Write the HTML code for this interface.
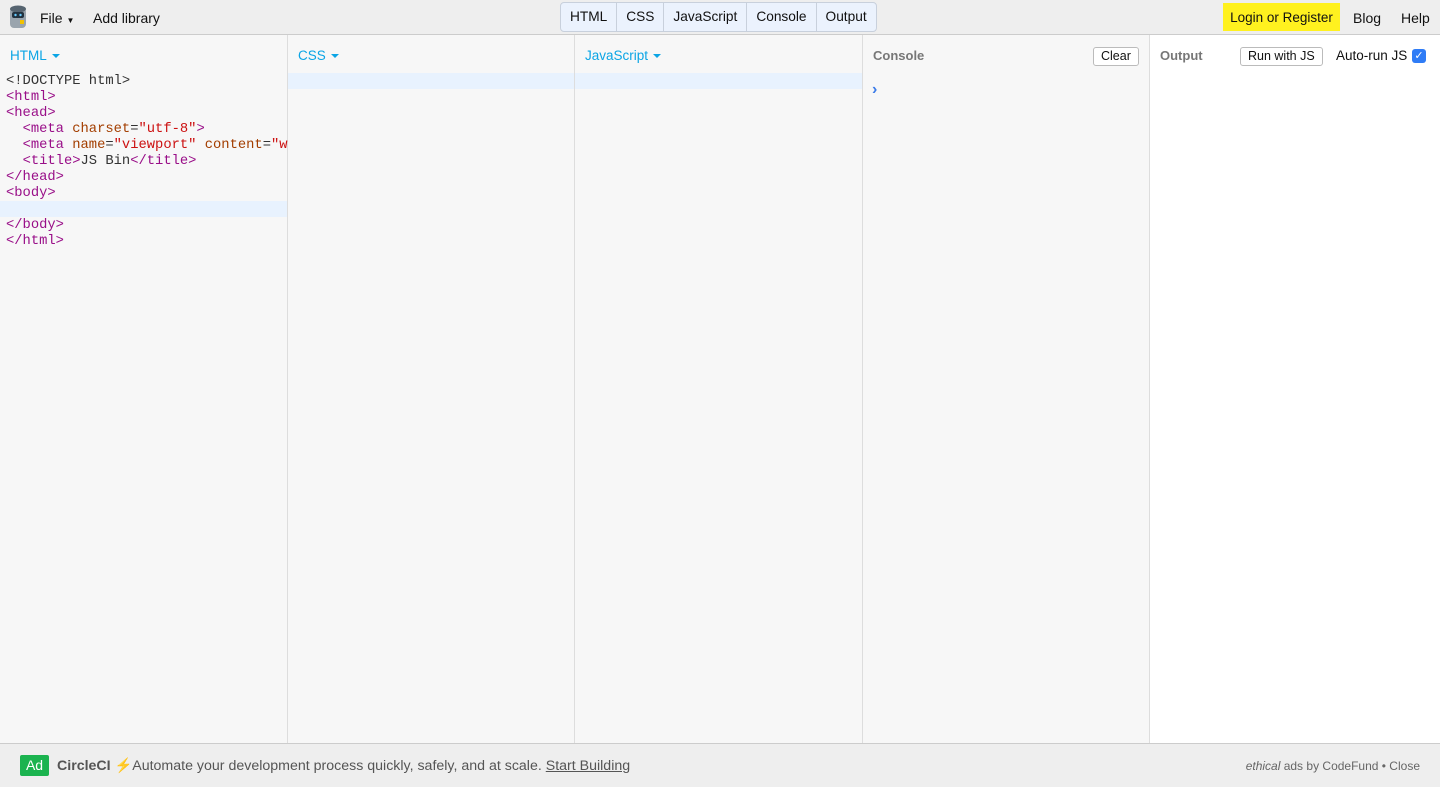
<!DOCTYPE html>
<html><head><meta charset="utf-8"><style>
*{box-sizing:border-box;margin:0;padding:0}
body{width:1440px;height:787px;overflow:hidden;font-family:"Liberation Sans",sans-serif;font-size:14px;background:#f7f7f7;position:relative;color:#111}
.top{position:absolute;left:0;top:0;width:1440px;height:35px;background:#eee;border-bottom:1px solid #ccc}
.top span{position:absolute;top:10px;font-size:14px}
.tabs{position:absolute;left:560px;top:2px;height:30px;display:flex;border:1px solid #c8d0dc;border-radius:4px;background:#ebf2fd;overflow:hidden}
.tabs div{padding:0 9px;line-height:28px;border-left:1px solid #c8d0dc;font-size:13.7px}
.tabs div:first-child{border-left:none}
.login{position:absolute;left:1223px;top:3px;width:117px;height:28px;background:#fff11f;line-height:29px;text-align:center;font-size:13.5px}
.panel{position:absolute;top:35px;height:708px;border-right:1px solid #ddd}
.ph{position:absolute;left:10px;top:13px;color:#0ba5e5;font-size:13.5px}
.ph i{display:inline-block;border:4px solid transparent;border-top:4px solid #0ba5e5;border-bottom:none;margin-left:5px;vertical-align:2px}
.code{position:absolute;left:6px;top:39px;font-family:"Liberation Mono",monospace;font-size:13.8px;line-height:16px;white-space:pre;color:#333}
.t{color:#990e88}.a{color:#a33e00}.s{color:#cc1111}
.hl{position:absolute;left:0;width:100%;height:16px;background:#e8f2fe}
.btn{position:absolute;top:12px;height:19px;border:1px solid #bbb;border-radius:3px;background:#fff;font-size:12.5px;line-height:17px;padding:0 7px}
.foot{position:absolute;left:0;top:743px;width:1440px;height:44px;background:#eee;border-top:1px solid #ccc}
</style></head><body>
<div class="top">
<svg style="position:absolute;left:9px;top:5px" width="18" height="24" viewBox="0 0 18 24"><rect x="1" y="3" width="16" height="20" rx="4" fill="#9aa4ad"/><ellipse cx="9" cy="4" rx="8" ry="3.5" fill="#566470"/><rect x="3" y="7" width="12" height="6" rx="2" fill="#23323f"/><circle cx="6.5" cy="10" r="1.2" fill="#6cf"/><circle cx="11.5" cy="10" r="1.2" fill="#6cf"/><rect x="11" y="15" width="4" height="4" fill="#f2c200"/></svg>
<span style="left:40px">File <small style="font-size:8px">▼</small></span>
<span style="left:93px">Add library</span>
<div class="tabs"><div>HTML</div><div>CSS</div><div>JavaScript</div><div>Console</div><div>Output</div></div>
<div class="login">Login or Register</div>
<span style="left:1353px">Blog</span>
<span style="left:1401px">Help</span>
</div>
<div class="panel" style="left:0;width:288px">
<div class="ph">HTML<i></i></div>
<div class="hl" style="top:166px"></div>
<div class="code">&lt;!DOCTYPE html&gt;
<span class="t">&lt;html&gt;</span>
<span class="t">&lt;head&gt;</span>
  <span class="t">&lt;meta</span> <span class="a">charset</span>=<span class="s">"utf-8"</span><span class="t">&gt;</span>
  <span class="t">&lt;meta</span> <span class="a">name</span>=<span class="s">"viewport"</span> <span class="a">content</span>=<span class="s">"w</span>
  <span class="t">&lt;title&gt;</span>JS Bin<span class="t">&lt;/title&gt;</span>
<span class="t">&lt;/head&gt;</span>
<span class="t">&lt;body&gt;</span>

<span class="t">&lt;/body&gt;</span>
<span class="t">&lt;/html&gt;</span></div>
</div>
<div class="panel" style="left:288px;width:287px"><div class="ph">CSS<i></i></div><div class="hl" style="top:38px"></div></div>
<div class="panel" style="left:575px;width:288px"><div class="ph">JavaScript<i></i></div><div class="hl" style="top:38px"></div></div>
<div class="panel" style="left:863px;width:287px">
<div class="ph" style="color:#777;font-weight:bold;font-size:13px">Console</div>
<div class="btn" style="left:230px">Clear</div>
<div style="position:absolute;left:9px;top:46px;color:#3b7be8;font-weight:bold;font-size:16px">›</div>
</div>
<div class="panel" style="left:1150px;width:290px;background:#fff;border:none">
<div class="ph" style="color:#777;font-weight:bold;font-size:13px">Output</div>
<div class="btn" style="left:90px">Run with JS</div>
<div style="position:absolute;left:186px;top:13px;font-size:13.5px">Auto-run JS</div>
<div style="position:absolute;left:262px;top:14px;width:14px;height:14px;background:#2f7cf6;border-radius:3px;color:#fff;font-size:11px;line-height:14px;text-align:center">✓</div>
</div>
<div class="foot">
<div style="position:absolute;left:20px;top:11px;width:29px;height:21px;background:#1bb34f;color:#fff;border-radius:2px;text-align:center;line-height:21px;font-size:14px">Ad</div>
<div style="position:absolute;left:57px;top:14px;font-size:14.2px;color:#555"><b>CircleCI</b> <span style="color:#f4c24d">⚡</span>Automate your development process quickly, safely, and at scale. <u>Start Building</u></div>
<div style="position:absolute;right:20px;top:15px;font-size:12px;color:#666"><i>ethical</i> ads by CodeFund • Close</div>
</div>
</body></html>
